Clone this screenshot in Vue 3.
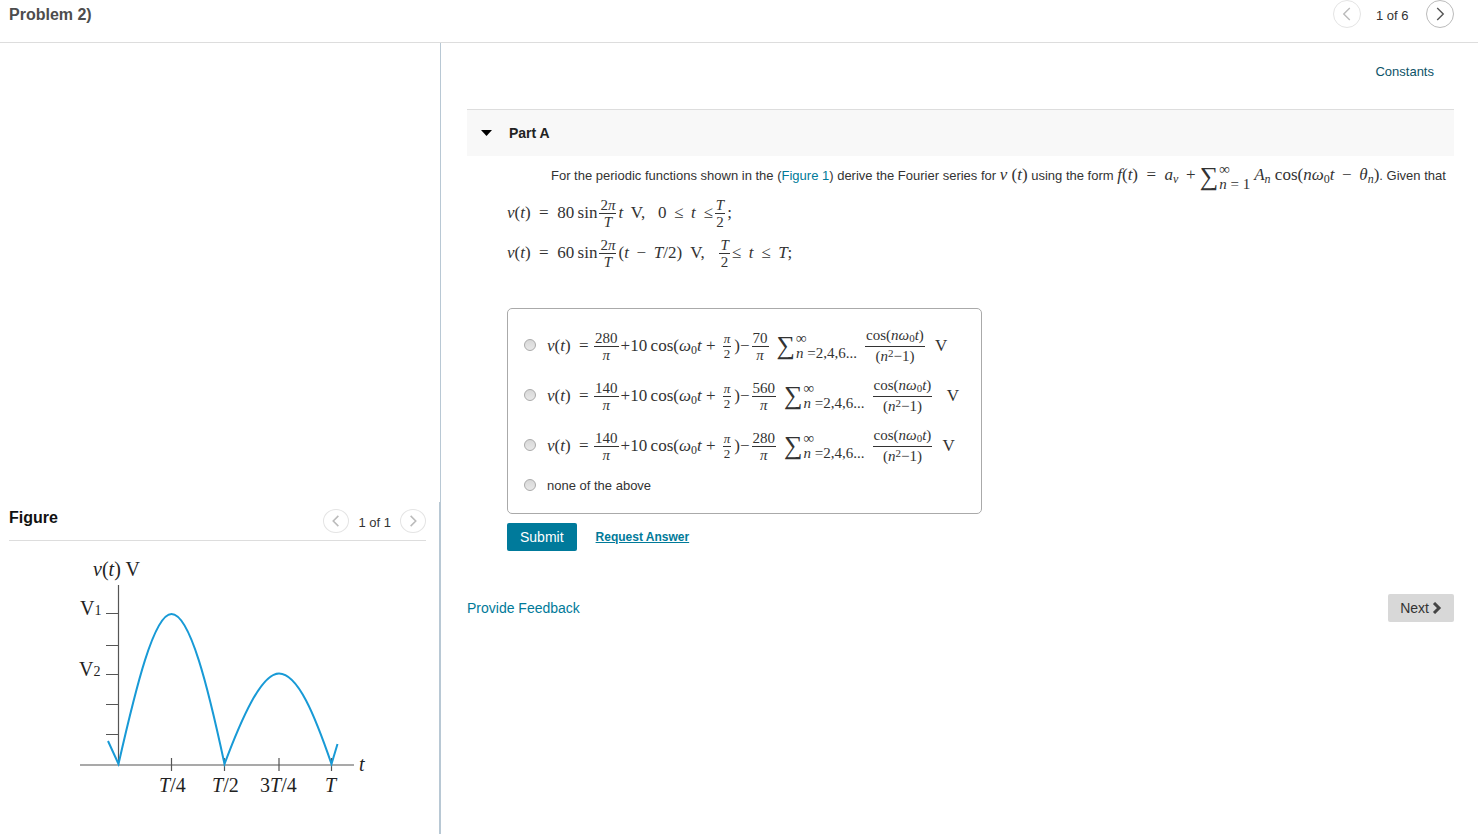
<script setup>
import { ref } from 'vue'

const answer = ref(null)

// Splits a formula into runs: single variables are italic, words and digits upright,
// and "_" or "^" lowers or raises the character after it.
function runs(source) {
  const found = source.match(/[_^].|cos|sin|V|[A-Za-zωθπ]|[^A-Za-zωθπ_^]+/g) || []
  return found.map((part) => {
    const shift = part[0] === '_' ? 'sub' : part[0] === '^' ? 'sup' : ''
    const text = shift ? part.slice(1) : part
    const variable = /^[A-Za-zωθπ]$/.test(text) && text !== 'V'
    return { text, classes: [shift, variable ? 'var' : ''] }
  })
}

const given = [
  [
    { text: 'v(t)  =  80\u2009sin' },
    { num: '2π', den: 'T' },
    { text: 't \u2009V,   0 \u2009≤ \u2009t \u2009≤' },
    { num: 'T', den: '2' },
    { text: ';' },
  ],
  [
    { text: 'v(t)  =  60\u2009sin' },
    { num: '2π', den: 'T' },
    { text: '(t \u2009−\u2009 T/2)  V,   ' },
    { num: 'T', den: '2' },
    { text: '≤ \u2009t \u2009≤ \u2009T;' },
  ],
]

function option(first, second, unit) {
  return [
    { text: 'v(t)  =\u2009' },
    { num: first, den: 'π' },
    { text: '+10\u2009cos(ω_0t + ' },
    { num: 'π', den: '2', size: 'tiny' },
    { text: ')−' },
    { num: second, den: 'π' },
    { sum: true, lower: 'n =2,4,6...' },
    { num: 'cos(nω_0t)', den: '(n^2−1)', size: 'tall' },
    { text: unit },
  ]
}

const options = [
  { id: 'a', formula: option('280', '70', '  V') },
  { id: 'b', formula: option('140', '560', '   V') },
  { id: 'c', formula: option('140', '280', '  V') },
]
</script>

<template>
  <div class="page">
    <header class="topbar">
      <h1>Problem 2)</h1>
      <nav class="pager" aria-label="Problem">
        <button class="round" type="button" disabled aria-label="Previous problem">
          <svg viewBox="0 0 28 28"><path d="M17 7.5 10.5 14 17 20.5" /></svg>
        </button>
        <span>1 of 6</span>
        <button class="round active" type="button" aria-label="Next problem">
          <svg viewBox="0 0 28 28"><path d="M11 7.5 17.5 14 11 20.5" /></svg>
        </button>
      </nav>
    </header>

    <div class="columns">
      <aside class="side">
        <div class="blank"></div>
        <section class="figure">
          <div class="figure-head">
            <h2>Figure</h2>
            <nav class="pager small" aria-label="Figure">
              <button class="round" type="button" disabled aria-label="Previous figure">
                <svg viewBox="0 0 28 28"><path d="M17 7.5 10.5 14 17 20.5" /></svg>
              </button>
              <span>1 of 1</span>
              <button class="round" type="button" disabled aria-label="Next figure">
                <svg viewBox="0 0 28 28"><path d="M11 7.5 17.5 14 11 20.5" /></svg>
              </button>
            </nav>
          </div>
          <svg class="plot" viewBox="0 0 320 270" role="img" aria-label="Graph of v(t)">
            <g class="axes">
              <path d="M58.5 35V215M20 215H294" />
              <path d="M46 63.5H58M46 95.5H58M46 124.5H58M46 154.5H58M46 184.5H58" />
              <path d="M111.5 208V221M164.5 208V221M219 208V221M271.5 208V221" />
            </g>
            <path
              class="curve"
              d="M48 191 58.5 214C76 137 94 64 111.5 64C130 64 148 137 164.5 214C181 170 201 123.500 219 123.500C238 123.500 255 166 271.500 214L277.500 194"
            />
            <g class="labels">
              <text x="33" y="26"><tspan class="it">v</tspan>(<tspan class="it">t</tspan>) V</text>
              <text x="20" y="65">V<tspan class="idx">1</tspan></text>
              <text x="19" y="126">V<tspan class="idx">2</tspan></text>
              <text x="99" y="242"><tspan class="it">T</tspan>/4</text>
              <text x="152" y="242"><tspan class="it">T</tspan>/2</text>
              <text x="200" y="242">3<tspan class="it">T</tspan>/4</text>
              <text x="265" y="242" class="it">T</text>
              <text x="299" y="221" class="it">t</text>
            </g>
          </svg>
        </section>
      </aside>

      <main class="main">
        <div class="tools"><a href="#constants">Constants</a></div>

        <section>
          <h2 class="part">
            <button type="button" aria-expanded="true">
              <svg viewBox="0 0 12 8"><path d="M0 1H11L5.500 7Z" /></svg>
              Part A
            </button>
          </h2>

          <div class="body">
            <p class="intro">
              For the periodic functions shown in the (<a href="#figure">Figure 1</a>) derive the
              Fourier series for
              <span class="inline-math"><i>v</i> (<i>t</i>)</span> using the form
              <span class="inline-math"><i>f</i>(<i>t</i>)&nbsp; =&nbsp; <i>a<span class="sub">v</span></i>&thinsp; +</span>
              <span class="sum">
                <span class="sigma">∑</span>
                <span class="limits"><span>∞</span><span><i>n</i> = 1</span></span>
              </span>
              <span class="inline-math">
                <i>A<span class="sub">n</span></i> cos(<i>nω</i><span class="sub">0</span><i>t</i>&thinsp; −&thinsp; <i>θ<span class="sub">n</span></i>)</span>. Given that
            </p>

            <div v-for="(line, l) in given" :key="l" class="math given">
              <template v-for="(token, k) in line" :key="k">
                <span v-if="token.num" class="frac">
                  <span><span v-for="(r, i) in runs(token.num)" :key="i" :class="r.classes">{{ r.text }}</span></span>
                  <span><span v-for="(r, i) in runs(token.den)" :key="i" :class="r.classes">{{ r.text }}</span></span>
                </span>
                <span v-else class="run"><span v-for="(r, i) in runs(token.text)" :key="i" :class="r.classes">{{ r.text }}</span></span>
              </template>
            </div>

            <form @submit.prevent>
              <div class="choices" role="radiogroup" aria-label="Fourier series of v(t)">
                <div v-for="o in options" :key="o.id" class="choice">
                  <input :id="o.id" v-model="answer" type="radio" name="answer" :value="o.id" />
                  <label :for="o.id" class="math">
                    <template v-for="(token, k) in o.formula" :key="k">
                      <span v-if="token.num" class="frac" :class="token.size">
                        <span><span v-for="(r, i) in runs(token.num)" :key="i" :class="r.classes">{{ r.text }}</span></span>
                        <span><span v-for="(r, i) in runs(token.den)" :key="i" :class="r.classes">{{ r.text }}</span></span>
                      </span>
                      <span v-else-if="token.sum" class="sum wide">
                        <span class="sigma">∑</span>
                        <span class="limits">
                          <span>∞</span>
                          <span><span v-for="(r, i) in runs(token.lower)" :key="i" :class="r.classes">{{ r.text }}</span></span>
                        </span>
                      </span>
                      <span v-else class="run"><span v-for="(r, i) in runs(token.text)" :key="i" :class="r.classes">{{ r.text }}</span></span>
                    </template>
                  </label>
                </div>
                <div class="choice short">
                  <input id="none" v-model="answer" type="radio" name="answer" value="none" />
                  <label for="none">none of the above</label>
                </div>
              </div>
              <div class="actions">
                <button class="submit" type="submit">Submit</button>
                <a href="#answer">Request Answer</a>
              </div>
            </form>
          </div>
        </section>

        <footer class="foot">
          <a href="#feedback">Provide Feedback</a>
          <button class="next" type="button">
            Next
            <svg viewBox="0 0 10 12"><path d="M2 1 7 6 2 11" /></svg>
          </button>
        </footer>
      </main>
    </div>
  </div>
</template>

<style>
body {
  margin: 0;
  background: #fff;
}
</style>

<style scoped>
.page {
  display: flex;
  flex-direction: column;
  min-height: 100vh;
  font: 13px/20px "Liberation Sans", Arial, sans-serif;
  color: #333;
}
h1,
h2,
p {
  margin: 0;
}
a {
  color: #007a99;
  text-decoration: none;
}
button {
  font: inherit;
  color: inherit;
  cursor: pointer;
}
.topbar {
  display: flex;
  justify-content: space-between;
  height: 42px;
  padding: 0 24px 0 9px;
  border-bottom: 1px solid #ddd;
}
h1 {
  font-size: 16px;
  line-height: 29px;
  color: #4d4d4d;
}
.pager {
  display: flex;
  align-items: center;
  height: 28px;
  gap: 15px;
  line-height: 32px;
}
.pager span {
  min-width: 35px;
  padding-top: 4px;
}
.round {
  width: 28px;
  height: 28px;
  padding: 0;
  border: 1px solid #e4e4e4;
  border-radius: 50%;
  background: #fff;
  cursor: default;
}
.round svg {
  display: block;
  width: 26px;
  height: 26px;
}
.round path {
  fill: none;
  stroke: #bbb;
  stroke-width: 1.5;
}
.round.active {
  border-color: #bbb;
  cursor: pointer;
}
.round.active path {
  stroke: #555;
}
.pager.small {
  gap: 9px;
}
.pager.small span {
  min-width: 0;
}
.pager.small .round {
  width: 26px;
  height: 24px;
}
.pager.small .round svg {
  width: 24px;
  height: 22px;
}
.pager.small path {
  stroke-width: 2;
}
.columns {
  flex: 1;
  display: grid;
  grid-template-columns: 441px minmax(0, 1fr);
}
.side {
  display: flex;
  flex-direction: column;
}
.blank {
  flex: 1;
  border-right: 1px solid #b8c8d4;
}
.figure {
  height: 332px;
  box-sizing: border-box;
  padding: 0 13px 0 9px;
  border-right: 2px solid #b8c8d4;
}
.figure-head {
  display: flex;
  justify-content: space-between;
  height: 38px;
  border-bottom: 1px solid #ddd;
}
.figure-head h2 {
  font-size: 16px;
  line-height: 32px;
  color: #111;
}
.figure-head .pager {
  height: 37px;
}
.plot {
  display: block;
  width: 320px;
  height: 270px;
  margin: 9px 0 0 51px;
}
.axes path {
  fill: none;
  stroke: #555;
  stroke-width: 1.2;
}
.curve {
  fill: none;
  stroke: #189ad6;
  stroke-width: 2;
}
.labels {
  font: 20px "Liberation Serif", "Times New Roman", serif;
  fill: #222;
}
.it {
  font-style: italic;
}
.idx {
  font-size: 14px;
}
.main {
  padding: 19px 24px 0 26px;
}
.tools {
  padding-right: 20px;
  text-align: right;
}
.tools a {
  color: #0d5368;
}
.part {
  margin-top: 27px;
  border-top: 1px solid #ddd;
  background: #f8f8f8;
}
.part button {
  display: flex;
  align-items: center;
  gap: 16px;
  width: 100%;
  height: 46px;
  padding: 0 14px;
  border: 0;
  background: none;
  font-size: 14px;
  font-weight: bold;
  color: #222;
}
.part svg {
  width: 12px;
  height: 8px;
}
.body {
  padding: 0 0 0 40px;
}
.intro {
  height: 37px;
  line-height: 38px;
  text-indent: 44px;
  white-space: nowrap;
}
.intro > * {
  text-indent: 0;
}
.inline-math,
.math {
  font-family: "Liberation Serif", "Times New Roman", serif;
  font-size: 17px;
}
.math {
  display: flex;
  align-items: center;
}
.given {
  height: 40px;
}
.run {
  white-space: pre;
}
.var {
  font-style: italic;
}
.sub,
.sup {
  font-size: 12px;
  line-height: 0;
}
.sub {
  vertical-align: -3px;
}
.sup {
  vertical-align: 5px;
}
.frac {
  display: inline-flex;
  flex-direction: column;
  align-items: stretch;
  margin: 0 2px;
  font-size: 15px;
  line-height: 16px;
  text-align: center;
}
.frac > span {
  height: 16px;
  padding: 0 1px;
}
.frac > span:first-child {
  border-bottom: 1px solid #333;
}
.frac.tiny {
  margin: 0 3px;
  font-size: 13px;
  line-height: 14px;
}
.frac.tiny > span {
  height: 14px;
}
.frac.tall > span {
  height: 19px;
}
.frac.tall > span:last-child {
  line-height: 18px;
}
.frac.tall .sub,
.frac.tall .sup {
  font-size: 11px;
}
.frac.tall .sub {
  vertical-align: -2px;
}
.frac.tall .sup {
  vertical-align: 4px;
}
.sum {
  display: inline-flex;
  align-items: center;
  gap: 1px;
  margin: 0 4px;
  font-family: "Liberation Serif", "Times New Roman", serif;
  font-size: 15px;
  vertical-align: middle;
}
.sum.wide {
  margin: 0 6px;
}
.sigma {
  font-size: 26px;
  line-height: 28px;
}
.limits {
  display: flex;
  flex-direction: column;
  line-height: 15px;
}
form {
  padding-top: 35px;
}
.choices {
  box-sizing: border-box;
  width: 475px;
  padding: 12px 16px;
  border: 1px solid #aaa;
  border-radius: 5px;
}
.choice {
  display: flex;
  align-items: center;
  gap: 11px;
  height: 50px;
}
.choice.short {
  height: 30px;
}
.choice label {
  white-space: nowrap;
}
.choice input {
  appearance: none;
  flex: none;
  width: 12px;
  height: 12px;
  margin: 0 0 2px;
  border: 1px solid #aaa;
  border-radius: 50%;
  background: linear-gradient(#d8d8d8, #e8e8e8);
}
.choice input:checked {
  background: radial-gradient(#333 35%, #e4e4e4 40%);
}
.actions {
  display: flex;
  align-items: center;
  gap: 19px;
  margin-top: 9px;
}
.submit {
  height: 28px;
  padding: 0 13px;
  border: 0;
  border-radius: 2px;
  background: #007a9b;
  font-size: 14px;
  color: #fff;
}
.actions a {
  font-size: 12px;
  font-weight: bold;
  text-decoration: underline;
}
.foot {
  display: flex;
  align-items: center;
  justify-content: space-between;
  margin-top: 43px;
  font-size: 14px;
}
.next {
  display: flex;
  align-items: center;
  gap: 3px;
  height: 28px;
  padding: 0 12px;
  border: 0;
  border-radius: 2px;
  background: #d8d8d8;
}
.next svg {
  width: 10px;
  height: 12px;
}
.next path {
  fill: none;
  stroke: #444;
  stroke-width: 3;
}
</style>
